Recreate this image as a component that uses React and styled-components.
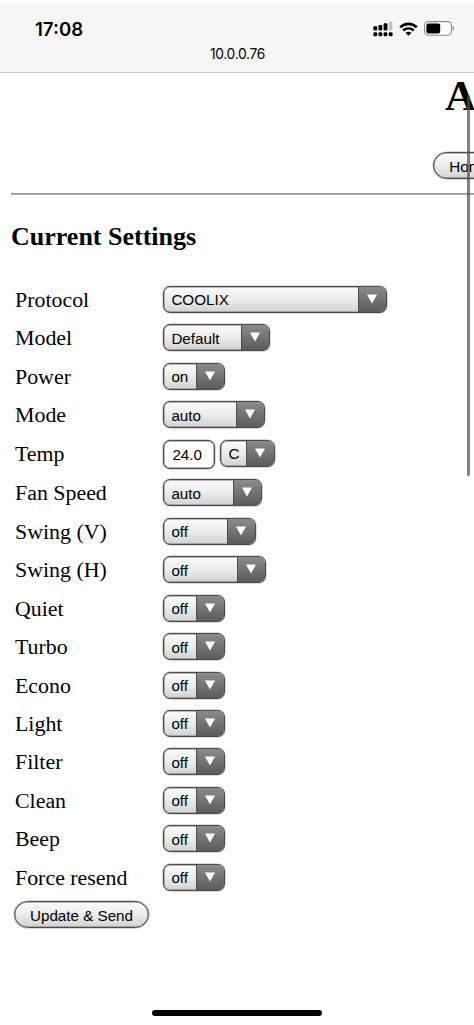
import React from "react";
import styled, { createGlobalStyle } from "styled-components";

const settings = [
    { label: 'Protocol', value: 'COOLIX', width: 224 },
    { label: 'Model', value: 'Default', width: 107 },
    { label: 'Power', value: 'on', width: 62 },
    { label: 'Mode', value: 'auto', width: 102 },
    { label: 'Temp', value: 'C', width: 55, degrees: '24.0' },
    { label: 'Fan Speed', value: 'auto', width: 99 },
    { label: 'Swing (V)', value: 'off', width: 93 },
    { label: 'Swing (H)', value: 'off', width: 103 },
    { label: 'Quiet', value: 'off', width: 62 },
    { label: 'Turbo', value: 'off', width: 62 },
    { label: 'Econo', value: 'off', width: 62 },
    { label: 'Light', value: 'off', width: 62 },
    { label: 'Filter', value: 'off', width: 62 },
    { label: 'Clean', value: 'off', width: 62 },
    { label: 'Beep', value: 'off', width: 62 },
    { label: 'Force resend', value: 'off', width: 62 },
];

const SignalIcon = () => (
    <svg width="20" height="16" viewBox="0 0 20 16">
        <rect x="0.4" y="5.3" width="3.8" height="4.2" rx="1" />
        <rect x="5.5" y="4" width="3.8" height="5.5" rx="1" />
        <rect x="10.6" y="2.2" width="3.8" height="7.3" rx="1" />
        <rect x="15.8" y="0.4" width="3.6" height="9.1" rx="1" fill="#c6c6c6" />
        <rect x="0.4" y="11.3" width="3.8" height="4" rx="1.2" />
        <rect x="5.5" y="11.3" width="3.8" height="4" rx="1.2" />
        <rect x="10.6" y="11.3" width="3.8" height="4" rx="1.2" />
        <rect x="15.8" y="11.3" width="3.8" height="4" rx="1.2" />
    </svg>
);

const WifiIcon = () => (
    <svg width="19" height="14" viewBox="0 0 19 14">
        <path d="M1.2 5.3C6 .7 13 .7 17.8 5.3" fill="none" stroke="#000" strokeWidth="2.6" />
        <path d="M4.2 8.5c3-2.8 7.6-2.8 10.6 0" fill="none" stroke="#000" strokeWidth="2.4" />
        <path d="M6.5 10.8c1.7-1.5 4.3-1.5 6 0l-3 3z" />
    </svg>
);

const BatteryIcon = () => (
    <svg width="31" height="15" viewBox="0 0 31 15">
        <rect x="0.6" y="0.6" width="26.8" height="13.6" rx="3.8" fill="#fff" stroke="#8a8a8a" strokeWidth="1.1" />
        <rect x="2.4" y="2.4" width="13.8" height="10" rx="2" />
        <path d="M28.7 5v4.8c1.5-.6 1.5-4.2 0-4.8z" fill="#777" />
    </svg>
);

const Dropdown = ({ value, width }) => (
    <Select type="button" $width={width}>
        <SelectValue>{value}</SelectValue>
        <SelectArrow>
            <svg width="10" height="10" viewBox="0 0 10 10">
                <path d="M0 .6h10L5 9.4z" fill="#fff" />
            </svg>
        </SelectArrow>
    </Select>
);

export const App = () => {
    return (
        <>
            <GlobalStyle />
            <Screen>
                <BrowserBar>
                    <StatusBar>
                        <Clock>17:08</Clock>
                        <StatusIcons>
                            <SignalIcon />
                            <WifiIcon />
                            <BatteryIcon />
                        </StatusIcons>
                    </StatusBar>
                    <Address>10.0.0.76</Address>
                </BrowserBar>
                <Page>
                    <Title>A</Title>
                    <Nav>
                        <PillButton $width={73}>Home</PillButton>
                    </Nav>
                    <Rule />
                    <Heading>Current Settings</Heading>
                    <Form>
                        {settings.map((item) => (
                            <Row key={item.label} $tall={!!item.degrees}>
                                <Label>{item.label}</Label>
                                {item.degrees && <TempInput defaultValue={item.degrees} />}
                                <Dropdown value={item.value} width={item.width} />
                            </Row>
                        ))}
                    </Form>
                    <Submit>
                        <PillButton $width={135}>Update &amp; Send</PillButton>
                    </Submit>
                </Page>
                <HomeIndicator />
                <ScrollThumb />
            </Screen>
        </>
    )
}

const GlobalStyle = createGlobalStyle`
    * {
        box-sizing: border-box;
    }

    body {
        margin: 0;
        background: #fff;
    }
`;

const Screen = styled.main`
    position: relative;
    display: flex;
    flex-direction: column;
    width: 474px;
    height: 1025px;
    overflow: hidden;
    background: #fff;
    color: #000;
`;

const BrowserBar = styled.header`
    height: 73px;
    flex-shrink: 0;
    background: #f7f7f7;
    border-top: 2px solid #fdfdfd;
    border-bottom: 1px solid #cbcbcb;
`;

const StatusBar = styled.div`
    display: flex;
    justify-content: space-between;
    align-items: center;
    height: 42px;
    padding: 11px 19px 0 35px;
`;

const Clock = styled.span`
    font: 600 18.6px/22px Inter, sans-serif;
`;

const StatusIcons = styled.div`
    display: flex;
    align-items: center;
    gap: 6px;
`;

const Address = styled.div`
    font: 13.8px/20px Inter, sans-serif;
    letter-spacing: -0.3px;
    text-align: center;
    padding-left: 1px;
`;

const Page = styled.section`
    display: flex;
    flex-direction: column;
    flex: 1;
    padding-left: 11px;
    font-family: "Liberation Serif", serif;
`;

const Title = styled.h1`
    margin: 0;
    padding-left: 434px;
    font-size: 43px;
    line-height: 45px;
    white-space: nowrap;
`;

const Nav = styled.nav`
    display: flex;
    margin-top: 34px;
    padding-left: 422px;
`;

const PillButton = styled.button`
    width: ${(props) => props.$width}px;
    height: 27px;
    flex-shrink: 0;
    padding: 1px 0 0;
    border: 1px solid #4c4c4c;
    border-radius: 14px;
    background: linear-gradient(#fbfbfb, #ececec 50%, #d2d2d2);
    box-shadow: inset 0 0 0 0.5px #777, 0 0 0 0.5px rgba(76, 76, 76, 0.4);
    color: #000;
    font: 15.2px "Liberation Sans", sans-serif;
    white-space: nowrap;
`;

const Rule = styled.hr`
    width: 100%;
    height: 2px;
    margin: 14px 0 0;
    border: 0;
    border-top: 1px solid #999;
    background: #b4b4b4;
`;

const Heading = styled.h2`
    margin: 26px 0 0;
    font-size: 26px;
    line-height: 32px;
`;

const Form = styled.div`
    display: flex;
    flex-direction: column;
    margin-top: 27px;
    padding-left: 4px;
`;

const Row = styled.div`
    display: flex;
    align-items: ${(props) => (props.$tall ? 'flex-start' : 'center')};
    height: ${(props) => (props.$tall ? 39.9 : 38.45)}px;
    padding-top: ${(props) => (props.$tall ? 6 : 0)}px;
`;

const Label = styled.label`
    width: 148.4px;
    padding-top: 1px;
    font-size: 21.9px;
    line-height: 26px;
    white-space: nowrap;
`;

const TempInput = styled.input`
    width: 51.5px;
    height: 29px;
    margin-right: 5.5px;
    padding: 1px 0 0 8px;
    border: 1px solid #4c4c4c;
    border-radius: 7px;
    background: #fff;
    box-shadow: inset 0 0 0 0.5px #777, 0 0 0 0.5px rgba(76, 76, 76, 0.4);
    color: #000;
    font: 15.2px "Liberation Sans", sans-serif;
`;

const Select = styled.button`
    display: flex;
    width: ${(props) => props.$width}px;
    height: 27px;
    padding: 0;
    overflow: hidden;
    border: 1px solid #4c4c4c;
    border-radius: 7px;
    background: linear-gradient(#fbfbfb, #ececec 50%, #d2d2d2);
    box-shadow: inset 0 0 0 0.5px #777, 0 0 0 0.5px rgba(76, 76, 76, 0.4);
    color: #000;
    font: 15.2px "Liberation Sans", sans-serif;
`;

const SelectValue = styled.span`
    flex: 1;
    align-self: center;
    padding: 1px 0 0 7px;
    text-align: left;
`;

const SelectArrow = styled.span`
    display: flex;
    justify-content: center;
    width: 28px;
    height: 100%;
    padding: 7px 2px 0 0;
    border-left: 1px solid #4c4c4c;
    background: linear-gradient(#8b8b8b, #5b5b5b);
`;

const Submit = styled.div`
    margin-top: 5px;
    padding-left: 3px;
`;

const HomeIndicator = styled.div`
    width: 170px;
    height: 6px;
    margin: 0 auto 9px;
    border-radius: 3px;
    background: #000;
`;

// floats over the page like the native scroll bar
const ScrollThumb = styled.div`
    position: absolute;
    top: 95px;
    right: 4px;
    width: 3px;
    height: 381px;
    border-radius: 2px;
    background: rgba(80, 80, 80, 0.72);
`;

export default App
